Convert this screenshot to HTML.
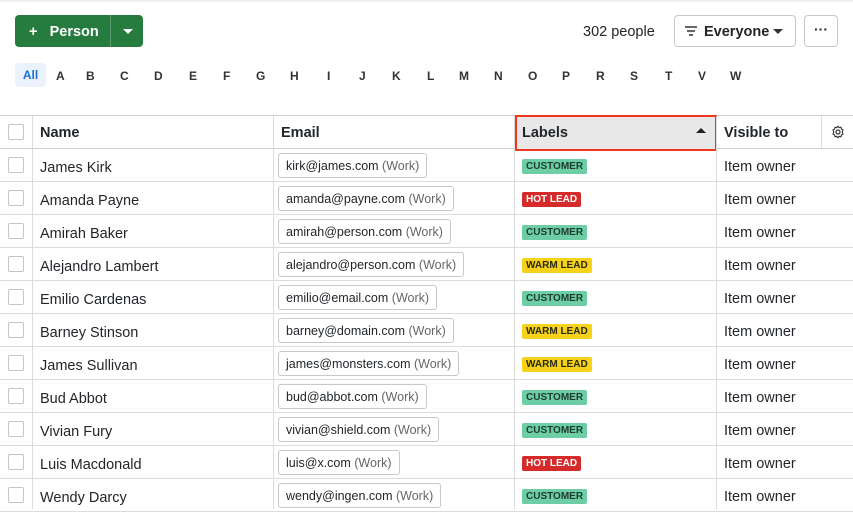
<!DOCTYPE html>
<html><head><style>
body{margin:0;width:853px;height:509px;overflow:hidden;background:#fff;font-family:"Liberation Sans",Arial,sans-serif;color:#22262a;position:relative}
.topline{position:absolute;left:0;top:0;width:853px;height:2px;background:#f0f0f0}
.btn{position:absolute;left:15px;top:15px;width:128px;height:32px;background:#267c3f;border-radius:4px;color:#fff;font-weight:bold;font-size:14.5px}
.btn .l{position:absolute;left:10px;top:1px;line-height:32px}
.btn .d{position:absolute;left:95px;top:0;width:1px;height:32px;background:#5e9c70}
.btn .c{position:absolute;left:108px;top:14px;border-left:5px solid transparent;border-right:5px solid transparent;border-top:5px solid #fff}
.cnt{position:absolute;left:583px;top:24px;font-size:14.5px}
.ev{position:absolute;left:674px;top:15px;width:120px;height:30px;border:1px solid #c8c8c8;border-radius:4px;font-size:14.5px;font-weight:bold}
.more{position:absolute;left:804px;top:15px;width:32px;height:30px;border:1px solid #c8c8c8;border-radius:4px;text-align:center;line-height:26px;font-weight:bold;font-size:14px}
.let{position:absolute;top:69px;font-size:12px;font-weight:bold;color:#333}
.all{position:absolute;left:15px;top:63px;width:31px;height:24px;background:#eaf3fd;border-radius:4px;color:#1c6fd1;font-size:12px;font-weight:bold;text-align:center;line-height:25px}
.hl{position:absolute;left:0;width:853px;height:1px;background:#dcdcdc}
.vl{position:absolute;width:1px;background:#dcdcdc}
.cb{position:absolute;left:8px;width:14px;height:14px;border:1px solid #c5c5c5;border-radius:2px;background:#fff}
.t{position:absolute;font-size:14.5px}
.th{position:absolute;top:125px;font-size:14.5px;font-weight:bold}
.em{position:absolute;left:278px;height:25px;border:1px solid #c8c8c8;border-radius:3px;font-size:12.5px;line-height:25px;padding:0 7px;box-sizing:border-box}
.em span{color:#666}
.bd{position:absolute;left:522px;height:15px;line-height:15px;padding:0 4px;border-radius:2px;font-size:10px;font-weight:bold}
.cu{background:#6dcea5;color:#1e3b30}.ho{background:#d52b2b;color:#fff}.wa{background:#f6d21b;color:#2a2a10}
</style></head><body>
<div class="topline"></div>
<div class="btn"><span class="l">&nbsp;+&nbsp;&nbsp; Person</span><div class="d"></div><div class="c"></div></div>
<div class="cnt">302 people</div>
<div class="ev"><svg style="position:absolute;left:10px;top:10px" width="12" height="10"><path d="M0 1H12M2 5H10M4 9H8" stroke="#333" stroke-width="1.5"/></svg><span style="position:absolute;left:29px;top:8px">Everyone</span><div style="position:absolute;left:98px;top:13px;border-left:5px solid transparent;border-right:5px solid transparent;border-top:5px solid #333"></div></div>
<div class="more">···</div>
<div class="all">All</div>
<div class="let" style="left:56px">A</div><div class="let" style="left:86px">B</div><div class="let" style="left:120px">C</div><div class="let" style="left:154px">D</div><div class="let" style="left:189px">E</div><div class="let" style="left:223px">F</div><div class="let" style="left:256px">G</div><div class="let" style="left:290px">H</div><div class="let" style="left:327px">I</div><div class="let" style="left:359px">J</div><div class="let" style="left:392px">K</div><div class="let" style="left:427px">L</div><div class="let" style="left:459px">M</div><div class="let" style="left:494px">N</div><div class="let" style="left:528px">O</div><div class="let" style="left:562px">P</div><div class="let" style="left:596px">R</div><div class="let" style="left:630px">S</div><div class="let" style="left:665px">T</div><div class="let" style="left:698px">V</div><div class="let" style="left:730px">W</div>
<div class="hl" style="top:115px;background:#cfcfcf"></div>
<div class="hl" style="top:148px;background:#cfcfcf"></div>
<div style="position:absolute;left:515px;top:115px;width:198px;height:32px;background:#e8e8e8;border:2px solid #f0361c"></div>
<div class="vl" style="left:32px;top:116px;height:393px"></div>
<div class="vl" style="left:273px;top:116px;height:393px"></div>
<div class="vl" style="left:514px;top:116px;height:393px"></div>
<div class="vl" style="left:716px;top:116px;height:393px"></div>
<div class="vl" style="left:821px;top:116px;height:32px"></div>
<div class="cb" style="top:124px"></div>
<div class="th" style="left:40px">Name</div><div class="th" style="left:281px">Email</div><div class="th" style="left:522px">Labels</div><div class="th" style="left:724px">Visible to</div>
<div style="position:absolute;left:696px;top:128px;border-left:5px solid transparent;border-right:5px solid transparent;border-bottom:5px solid #222"></div>
<svg style="position:absolute;left:831px;top:125px" width="14" height="14" viewBox="0 0 14 14"><circle cx="7" cy="7" r="2" fill="none" stroke="#333" stroke-width="1.2"/><path d="M7 1.2L8.2 2.6L10 2.3L10.4 4L12 5L11.2 7L12 9L10.4 10L10 11.7L8.2 11.4L7 12.8L5.8 11.4L4 11.7L3.6 10L2 9L2.8 7L2 5L3.6 4L4 2.3L5.8 2.6Z" fill="none" stroke="#333" stroke-width="1.1"/></svg>
<div id="rows"></div>
<script>
var d=[["James Kirk","kirk@james.com","cu"],["Amanda Payne","amanda@payne.com","ho"],["Amirah Baker","amirah@person.com","cu"],["Alejandro Lambert","alejandro@person.com","wa"],["Emilio Cardenas","emilio@email.com","cu"],["Barney Stinson","barney@domain.com","wa"],["James Sullivan","james@monsters.com","wa"],["Bud Abbot","bud@abbot.com","cu"],["Vivian Fury","vivian@shield.com","cu"],["Luis Macdonald","luis@x.com","ho"],["Wendy Darcy","wendy@ingen.com","cu"]];
var L={cu:"CUSTOMER",ho:"HOT LEAD",wa:"WARM LEAD"},h="";
d.forEach(function(r,i){var y=149+i*33;
h+='<div class="hl" style="top:'+(y+32)+'px"></div><div class="cb" style="top:'+(y+8)+'px"></div>';
h+='<div class="t" style="left:40px;top:'+(y+11)+'px">'+r[0]+'</div>';
h+='<div class="em" style="top:'+(y+4)+'px">'+r[1]+' <span>(Work)</span></div>';
h+='<div class="bd '+r[2]+'" style="top:'+(y+10)+'px">'+L[r[2]]+'</div>';
h+='<div class="t" style="left:724px;top:'+(y+10)+'px">Item owner</div>';});
document.getElementById("rows").innerHTML=h;
</script>
</body></html>
